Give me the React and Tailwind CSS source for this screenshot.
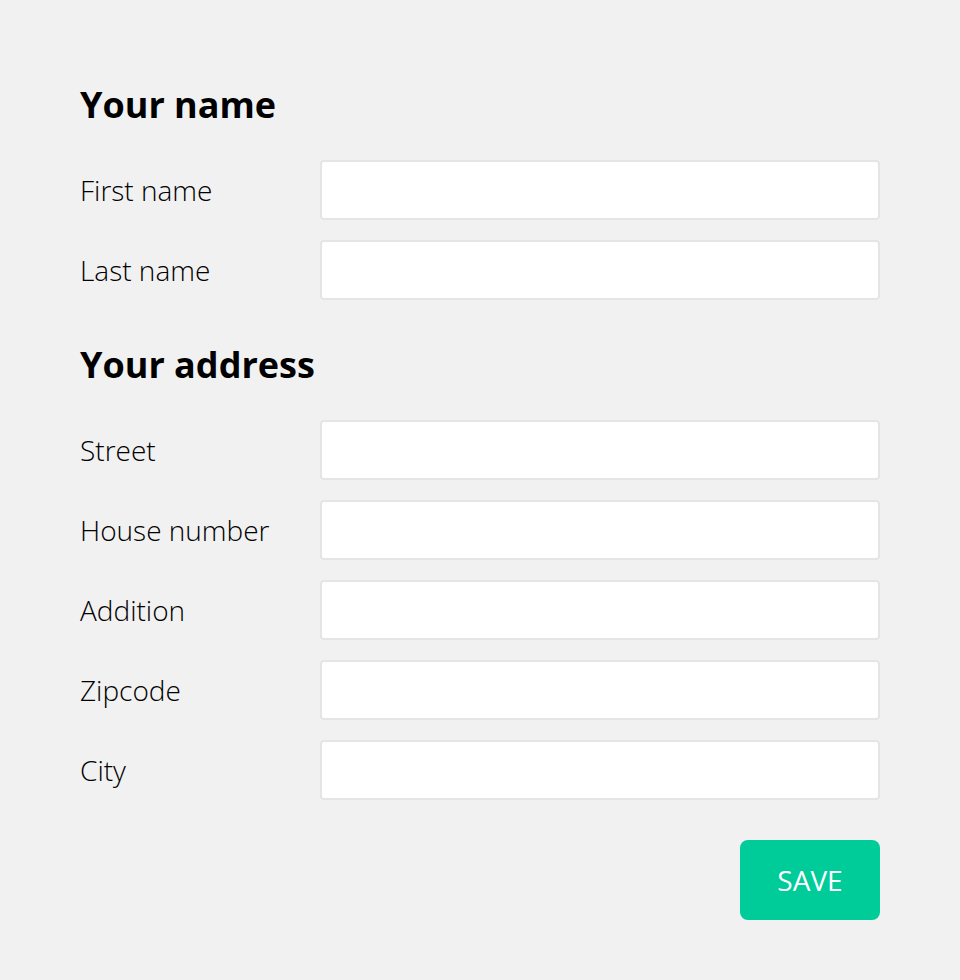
import React from "react";

const font = { fontFamily: '"Open Sans", "Noto Sans", sans-serif' };

function Row({ label }) {
  return (
    <div className="flex items-center h-[60px]">
      <label className="w-[240px] shrink-0 text-[28px] font-light text-black">{label}</label>
      <input className="w-[560px] h-[60px] bg-white border-2 border-[#e5e5e5] rounded-[4px] outline-none px-3" />
    </div>
  );
}

function Heading({ children, className = "" }) {
  return (
    <h2 className={"h-[50px] flex items-center text-[36px] font-bold text-black " + className}>{children}</h2>
  );
}

export default function App() {
  return (
    <div className="w-[960px] h-[980px] bg-[#f1f1f1] px-20 pt-20" style={font}>
      <Heading className="mb-[30px]">Your name</Heading>
      <div className="flex flex-col gap-5">
        <Row label="First name" />
        <Row label="Last name" />
      </div>
      <Heading className="mt-10 mb-[30px]">Your address</Heading>
      <div className="flex flex-col gap-5">
        <Row label="Street" />
        <Row label="House number" />
        <Row label="Addition" />
        <Row label="Zipcode" />
        <Row label="City" />
      </div>
      <div className="flex justify-end mt-10">
        <button className="w-[140px] h-[80px] rounded-[8px] bg-[#00cc99] text-white text-[28px] font-normal">SAVE</button>
      </div>
    </div>
  );
}
